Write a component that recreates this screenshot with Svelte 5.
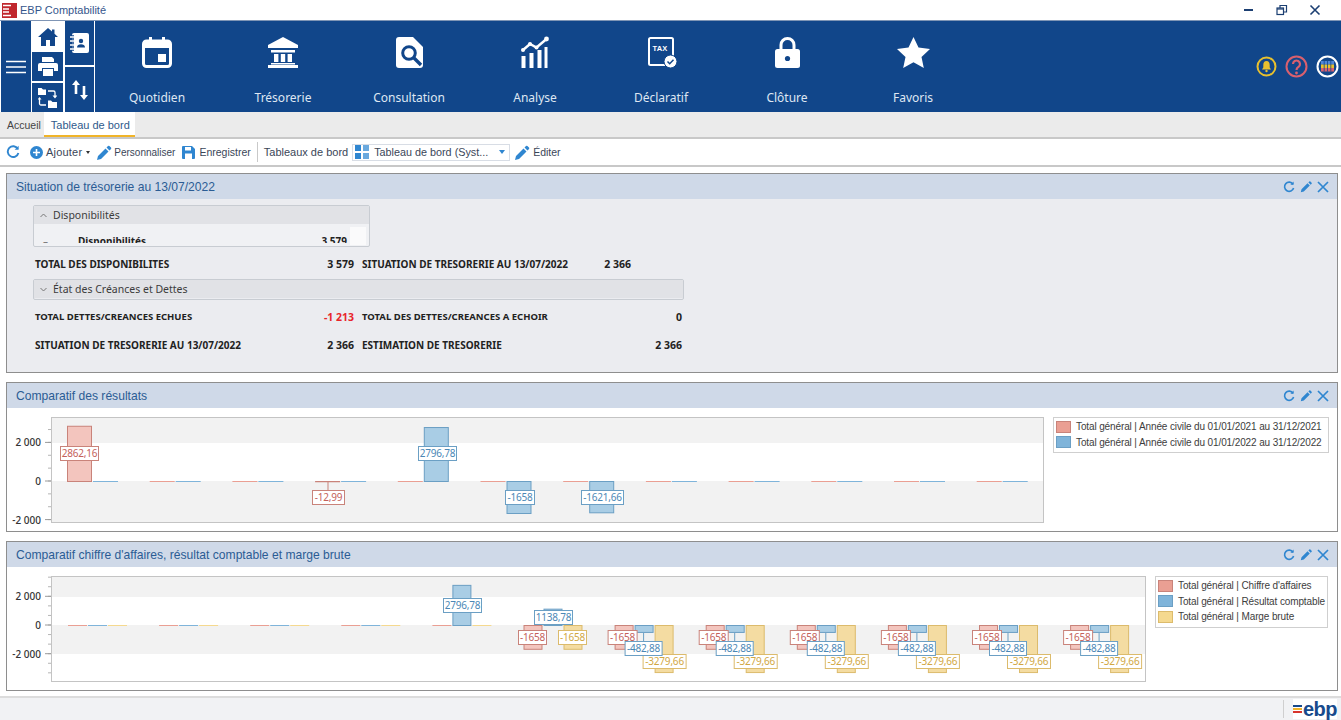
<script>
  const red = { fill: '#f3c5be', line: '#c9837a', text: '#c4615a', swatch: '#ea9f93' };
  const blue = { fill: '#a9cde5', line: '#6b9fc4', text: '#4b87b5', swatch: '#7fb4da' };
  const yellow = { fill: '#f4dca2', line: '#dcbb6c', text: '#d1a743', swatch: '#f5d98f' };

  const nav = ['Quotidien', 'Trésorerie', 'Consultation', 'Analyse', 'Déclaratif', 'Clôture', 'Favoris'];

  function bars(starts, width, series) {
    const out = [];
    starts.forEach((x, g) => {
      series.forEach((s, i) => {
        out.push({ x: x + i * (width + 1), w: width, v: s.values[g] ?? 0, c: s.color });
      });
    });
    return out;
  }

  const starts1 = Array.from({ length: 12 }, (_, i) => 67 + i * 82.7);
  const starts2 = Array.from({ length: 12 }, (_, i) => 68 + i * 91.1);

  const repeated = (first, n, v) => [...first, ...Array(n).fill(v)];

  const charts = [
    {
      title: 'Comparatif des résultats',
      view: { x: 7, y: 408, w: 1037, h: 122 },
      plot: { left: 51, right: 1043, top: 417, bottom: 522 },
      zero: 481,
      unit: 38.6,
      bands: [[417, 443, true], [443, 481, false], [481, 522, true]],
      ticks: [['2 000', 2000], ['0', 0], ['-2 000', -2000]],
      bars: bars(starts1, 25, [
        { color: red, values: [2862.16, 0, 0, -12.99] },
        { color: blue, values: [0, 0, 0, 0, 2796.78, -1658, -1621.66] }
      ]),
      labels: [
        { x: 60, y: 446, w: 38, t: '2862,16', c: red },
        { x: 312, y: 490, w: 32, t: '-12,99', c: red, stem: [328, 481] },
        { x: 418, y: 446, w: 38, t: '2796,78', c: blue },
        { x: 505, y: 490, w: 29, t: '-1658', c: blue },
        { x: 581, y: 490, w: 42, t: '-1621,66', c: blue }
      ],
      legend: [
        { c: red, t: 'Total général | Année civile du 01/01/2021 au 31/12/2021' },
        { c: blue, t: 'Total général | Année civile du 01/01/2022 au 31/12/2022' }
      ]
    },
    {
      title: "Comparatif chiffre d'affaires, résultat comptable et marge brute",
      view: { x: 7, y: 567, w: 1139, h: 122 },
      plot: { left: 51, right: 1145, top: 576, bottom: 681 },
      zero: 625,
      unit: 28.7,
      bands: [[576, 597, true], [597, 625, false], [625, 654, true], [654, 681, false]],
      ticks: [['2 000', 2000], ['0', 0], ['-2 000', -2000]],
      bars: bars(starts2, 19, [
        { color: red, values: repeated([0, 0, 0, 0, 0, -1658], 6, -1658) },
        { color: blue, values: repeated([0, 0, 0, 0, 2796.78, 1138.78], 6, -482.88) },
        { color: yellow, values: repeated([0, 0, 0, 0, 0, -1658], 6, -3279.66) }
      ]),
      labels: [
        { x: 443, y: 598, w: 38, t: '2796,78', c: blue },
        { x: 534, y: 610, w: 38, t: '1138,78', c: blue },
        { x: 518, y: 630, w: 28, t: '-1658', c: red },
        { x: 558, y: 630, w: 28, t: '-1658', c: yellow },
        ...starts2.slice(6).flatMap((x) => [
          { x: x + 28, y: 654, w: 43, t: '-3279,66', c: yellow },
          { x: x - 7, y: 630, w: 29, t: '-1658', c: red },
          { x: x + 10, y: 641, w: 37, t: '-482,88', c: blue, stem: [x + 29, 633] }
        ])
      ],
      legend: [
        { c: red, t: "Total général | Chiffre d'affaires" },
        { c: blue, t: 'Total général | Résultat comptable' },
        { c: yellow, t: 'Total général | Marge brute' }
      ]
    }
  ];

  function minors(chart) {
    const step = chart.unit / 3;
    const out = [];
    for (let y = chart.zero - step * 6; y < chart.plot.bottom; y += step) {
      if (y > chart.plot.top) out.push(y);
    }
    return out;
  }
</script>

{#snippet panelTools()}
  <div class="tools">
    <svg width="12" height="12" viewBox="0 0 12 12" fill="none" stroke="#2f86d0" stroke-width="1.6">
      <path d="M10 3.2A4.6 4.6 0 1 0 10.6 7" />
      <path d="M10.6 .6v3.2H7.4" fill="#2f86d0" stroke="none" />
    </svg>
    <svg width="12" height="12" viewBox="0 0 12 12" fill="#2f86d0">
      <path d="M0.8 11.2l.7-3 6-6 2.3 2.3-6 6zM8.4 1.4l.9-.9a.8.8 0 0 1 1.1 0l1.2 1.2a.8.8 0 0 1 0 1.1l-.9.9z" />
    </svg>
    <svg width="12" height="12" viewBox="0 0 12 12" stroke="#2f86d0" stroke-width="1.7">
      <path d="M1 1l10 10M11 1L1 11" />
    </svg>
  </div>
{/snippet}

{#snippet chevron(up)}
  <svg class="chev" width="7" height="5" viewBox="0 0 7 5" fill="none" stroke="#777" stroke-width="1">
    <path d={up ? 'M.5 4L3.500 1l3 3' : 'M.5 1l3 3 3-3'} />
  </svg>
{/snippet}

<div class="app">
  <header class="titlebar">
    <svg class="applogo" width="15" height="15" viewBox="0 0 15 15">
      <rect width="15" height="15" fill="#c0272d" />
      <path d="M1 2.500h8M1 6h6M1 9h6M1 12.500h8" stroke="#fff" stroke-width="1.400" />
    </svg>
    <span class="apptitle">EBP Comptabilité</span>
    <div class="winctl">
      <svg width="12" height="12" viewBox="0 0 12 12"><path d="M1 6h9" stroke="#1c3f72" stroke-width="2" /></svg>
      <svg width="12" height="12" viewBox="0 0 12 12" fill="none" stroke="#1c3f72" stroke-width="1.200"><rect x="1" y="4" width="6.500" height="6.500" /><path d="M4 4V1.500h6.500V8H7.500" /><path d="M1 5h6.500" /></svg>
      <svg width="12" height="12" viewBox="0 0 12 12"><path d="M1.500 1.500l9 9M10.500 1.500l-9 9" stroke="#1c3f72" stroke-width="1.600" /></svg>
    </div>
  </header>

  <nav class="ribbon">
    <div class="burger">
      <svg width="20" height="14" viewBox="0 0 20 14" stroke="#fff" stroke-width="1.400"><path d="M0 1.500h20M0 7h20M0 12.500h20" /></svg>
    </div>
    <div class="tiles">
      <div class="tilecol first">
        <div class="tile home">
          <svg width="20" height="18" viewBox="0 0 20 18" fill="#11468a"><path d="M10 0L0 9h3v9h5v-6h4v6h5V9h3l-3.500-3.200V1.500h-2.500v2z" /></svg>
        </div>
        <div class="tile print">
          <svg width="20" height="19" viewBox="0 0 20 19" fill="#fff"><path d="M4 0h10l2 2v3H4z" /><path d="M2 6h16a2 2 0 0 1 2 2v6h-4v-3H4v3H0V8a2 2 0 0 1 2-2z" /><path d="M5 12h10v7H5z" /></svg>
        </div>
        <div class="tile swap">
          <svg width="19" height="20" viewBox="0 0 19 20" fill="#fff"><path d="M0 0h3.500l1.500 1.500h3v5.500H0z" /><path d="M10 12.500h3l1.500 1.500H19v6h-9z" /><path d="M10 3h5.500a1.500 1.500 0 0 1 1.500 1.500V8M8 17H3a1.500 1.500 0 0 1-1.500-1.500V11" fill="none" stroke="#fff" stroke-width="1.300" /><path d="M14.500 7.500h5l-2.500 3zM-.5 11.500h4L1.500 9z" /></svg>
        </div>
      </div>
      <div class="tilecol second">
        <div class="tile contact">
          <svg width="19" height="20" viewBox="0 0 19 20"><path d="M2 2a2 2 0 0 1 2-2h13a2 2 0 0 1 2 2v16a2 2 0 0 1-2 2H4a2 2 0 0 1-2-2z" fill="#fff" /><path d="M0 4h4M0 8h4M0 12h4M0 16h4" stroke="#11468a" stroke-width="3.400" /><path d="M0 4h4M0 8h4M0 12h4M0 16h4" stroke="#fff" stroke-width="1.400" /><circle cx="11" cy="8" r="2.200" fill="#11468a" /><path d="M7 14.500c0-2.400 1.800-3.300 4-3.300s4 .9 4 3.300z" fill="#11468a" /></svg>
        </div>
        <div class="tile arrows">
          <svg width="16" height="20" viewBox="0 0 16 20" fill="#fff"><path d="M4 0l4 5H5.300v9H2.700V5H0zM12 20l-4-5h2.700V6h2.600v9H16z" /></svg>
        </div>
      </div>
    </div>

    {#each nav as label, i}
      <button class="navitem">
        <span class="navicon">
          {#if i === 0}
            <svg width="30" height="32" viewBox="0 0 30 32" fill="none"><rect x="1.500" y="5" width="27" height="25.500" rx="3" stroke="#fff" stroke-width="3" /><path d="M2 6h26v6H2zM7 1h3v6H7zM20 1h3v6h-3z" fill="#fff" /><rect x="16" y="18" width="8" height="8" fill="#fff" /></svg>
          {:else if i === 1}
            <svg width="30" height="31" viewBox="0 0 30 31" fill="#fff"><path d="M15 0L0 8v3h30V8z" /><path d="M3 13h24v2.400H3zM6 17h4.400v8H6zM12.800 17h4.400v8h-4.400zM19.600 17h4.400v8h-4.400zM3 26h24v1.600H3zM0 28h30v3H0z" /></svg>
          {:else if i === 2}
            <svg width="27" height="31" viewBox="0 0 27 31"><path d="M3 0h14l10 10v18a3 3 0 0 1-3 3H3a3 3 0 0 1-3-3V3a3 3 0 0 1 3-3z" fill="#fff" /><circle cx="13" cy="16" r="6.300" fill="none" stroke="#11468a" stroke-width="3" /><path d="M17.500 20.500L25 28" stroke="#11468a" stroke-width="3.400" /></svg>
          {:else if i === 3}
            <svg width="28" height="32" viewBox="0 0 28 32" fill="#fff"><path d="M2 20h4v12H2zM10 17h4v15h-4zM18 14h4v18h-4zM25 11h3v21h-3z" transform="translate(-1.500 0)" /><path d="M2 14l7-6 6.500 3.500L25.500 3" fill="none" stroke="#fff" stroke-width="2.400" /><circle cx="2" cy="14" r="2" /><circle cx="9" cy="8" r="2" /><circle cx="15.500" cy="11.500" r="2" /><circle cx="25.500" cy="3" r="2.400" /></svg>
          {:else if i === 4}
            <span class="taxicon">
              <svg width="29" height="31" viewBox="0 0 29 31" fill="none"><rect x="1" y="1" width="24" height="27" rx="1.500" stroke="#fff" stroke-width="2" /><circle cx="22.500" cy="24.500" r="6.500" fill="#fff" stroke="#11468a" stroke-width="1" /><path d="M19.500 24.500l2.200 2.200 3.800-4" stroke="#11468a" stroke-width="1.500" /></svg>
              <span class="taxtext">TAX</span>
            </span>
          {:else if i === 5}
            <svg width="25" height="31" viewBox="0 0 25 31"><path d="M6 13V8a6.500 6.500 0 0 1 13 0v5" fill="none" stroke="#fff" stroke-width="3" /><rect y="12" width="25" height="19" rx="2.500" fill="#fff" /><circle cx="12.500" cy="21.500" r="2.600" fill="#11468a" /></svg>
          {:else}
            <svg width="33" height="31" viewBox="0 0 33 31" fill="#fff"><path d="M16.500 0l5 10.600 11.500 1.400-8.500 8 2.300 11-10.300-5.700-10.300 5.700 2.300-11L0 12l11.500-1.400z" /></svg>
          {/if}
        </span>
        <span class="navlabel">{label}</span>
      </button>
    {/each}

    <div class="rightbtns">
      <svg width="21" height="21" viewBox="0 0 21 21"><circle cx="10.500" cy="10.500" r="9" fill="none" stroke="#e8c02e" stroke-width="2" /><path d="M10.500 5c2.400 0 3.200 1.800 3.200 4v2.500l1.300 2H6l1.300-2V9c0-2.200.8-4 3.200-4z" fill="#e8c02e" /><circle cx="10.500" cy="15" r="1.200" fill="#e8c02e" /></svg>
      <svg width="23" height="23" viewBox="0 0 23 23"><circle cx="11.500" cy="11.500" r="10" fill="none" stroke="#d9606e" stroke-width="2" /><path d="M8 9a3.500 3.500 0 1 1 5.500 2.900c-1.300.9-2 1.500-2 3" fill="none" stroke="#d9606e" stroke-width="2.200" /><circle cx="11.500" cy="18" r="1.400" fill="#d9606e" /></svg>
      <svg width="23" height="23" viewBox="0 0 23 23"><circle cx="11.500" cy="11.500" r="10" fill="#11468a" stroke="#fff" stroke-width="2" /><rect x="5" y="6" width="13" height="3.500" fill="#4f86d8" /><rect x="5" y="9.500" width="13" height="3.500" fill="#e8c02e" /><rect x="5" y="13" width="13" height="3.500" fill="#d9606e" /><path d="M8.200 6v10.500M11.500 6v10.500M14.800 6v10.500" stroke="#11468a" stroke-width=".8" /></svg>
    </div>
  </nav>

  <div class="tabs">
    <span class="tab">Accueil</span>
    <span class="tab active">Tableau de bord</span>
  </div>

  <div class="toolbar">
    <svg class="refresh" width="14" height="14" viewBox="0 0 14 14" fill="none" stroke="#2f86d0" stroke-width="1.900"><path d="M11.800 3.800A5.400 5.400 0 1 0 12.400 8" /><path d="M12.600.8v4H8.600" fill="#2f86d0" stroke="none" /></svg>
    <span class="tbtn add">
      <svg width="13" height="13" viewBox="0 0 13 13"><circle cx="6.500" cy="6.500" r="6.500" fill="#2f86d0" /><path d="M6.500 3v7M3 6.500h7" stroke="#fff" stroke-width="1.600" /></svg>
      Ajouter<i class="caret"></i>
    </span>
    <span class="tbtn perso">
      <svg width="15" height="15" viewBox="0 0 15 15" fill="#2f86d0"><path d="M0 15l1-4 7.500-7.500 3 3L4 14zM9.500 2.500l1.500-1.500a1 1 0 0 1 1.400 0l1.600 1.600a1 1 0 0 1 0 1.400L12.500 5.500z" /></svg>
      Personnaliser
    </span>
    <span class="tbtn save">
      <svg width="13" height="13" viewBox="0 0 13 13" fill="#2f86d0"><path d="M1 0h9l3 3v9a1 1 0 0 1-1 1H1a1 1 0 0 1-1-1V1a1 1 0 0 1 1-1z" /><rect x="3" y="1" width="6" height="3.500" fill="#fff" /><rect x="3" y="7.500" width="7" height="5.500" fill="#fff" /></svg>
      Enregistrer
    </span>
    <span class="sep"></span>
    <span class="tlabel">Tableaux de bord</span>
    <span class="combo">
      <svg width="14" height="14" viewBox="0 0 14 14" fill="#2f86d0"><rect width="6" height="6" /><rect x="8" width="6" height="6" fill="#6aa9de" /><rect y="8" width="6" height="6" /><rect x="8" y="8" width="6" height="6" fill="#6aa9de" /></svg>
      <span class="combotext">Tableau de bord (Syst...</span>
      <i class="comboarrow"></i>
    </span>
    <span class="tbtn edit">
      <svg width="15" height="15" viewBox="0 0 15 15" fill="#2f86d0"><path d="M0 15l1-4 7.500-7.500 3 3L4 14zM9.500 2.500l1.500-1.500a1 1 0 0 1 1.400 0l1.600 1.600a1 1 0 0 1 0 1.400L12.500 5.500z" /></svg>
      Éditer
    </span>
  </div>

  <main class="content">
    <section class="panel tresorerie">
      <div class="panelhead"><h2>Situation de trésorerie au 13/07/2022</h2>{@render panelTools()}</div>
      <div class="treso-body">
        <div class="expander first">
          <div class="exphead">{@render chevron(true)}Disponibilités</div>
          <div class="expclip">
            <div class="exprow"><span class="minus">–</span><b>Disponibilités</b><b class="cut">3 579</b></div>
          </div>
          <span class="scroll"></span>
        </div>
        <div class="row r1">
          <b>TOTAL DES DISPONIBILITES</b><b class="num">3 579</b>
          <b>SITUATION DE TRESORERIE AU 13/07/2022</b><b class="num short">2 366</b>
        </div>
        <div class="expander second">
          <div class="exphead">{@render chevron(false)}État des Créances et Dettes</div>
        </div>
        <div class="row r2">
          <b class="small">TOTAL DETTES/CREANCES ECHUES</b><b class="num neg">-1 213</b>
          <b class="small">TOTAL DES DETTES/CREANCES A ECHOIR</b><b class="num">0</b>
        </div>
        <div class="row r3">
          <b>SITUATION DE TRESORERIE AU 13/07/2022</b><b class="num">2 366</b>
          <b>ESTIMATION DE TRESORERIE</b><b class="num">2 366</b>
        </div>
      </div>
    </section>

    {#each charts as chart}
      <section class="panel chartpanel">
        <div class="panelhead"><h2>{chart.title}</h2>{@render panelTools()}</div>
        <div class="chartbody">
          <svg class="chart" width={chart.view.w} height={chart.view.h} viewBox="{chart.view.x} {chart.view.y} {chart.view.w} {chart.view.h}">
            {#each chart.bands as [a, b, gray]}
              <rect x={chart.plot.left} y={a} width={chart.plot.right - chart.plot.left} height={b - a} fill={gray ? '#f2f2f2' : '#fff'} />
              <line x1={chart.plot.left} x2={chart.plot.right} y1={b + 0.5} y2={b + 0.5} stroke="#e2e2e2" />
            {/each}
            <rect x={chart.plot.left + 0.5} y={chart.plot.top + 0.5} width={chart.plot.right - chart.plot.left} height={chart.plot.bottom - chart.plot.top} fill="none" stroke="#c4c4c4" />
            {#each minors(chart) as y}
              <line x1="48" x2="51" y1={y} y2={y} stroke="#b5b5b5" />
            {/each}
            {#each chart.ticks as [name, t]}
              {@const y = chart.zero - (t / 2000) * chart.unit}
              <line x1="45" x2="51" y1={y} y2={y} stroke="#9a9a9a" />
              <text class="axis" x="41" y={y + 4} text-anchor="end">{name}</text>
            {/each}
            {#each chart.bars as b}
              {#if b.v === 0}
                <rect x={b.x} y={chart.zero} width={b.w} height="1" fill={b.c.swatch} />
              {:else}
                {@const h = Math.abs(b.v) / 2000 * chart.unit}
                <rect x={b.x + 0.5} y={(b.v > 0 ? chart.zero - h : chart.zero) + 0.5} width={b.w - 1} height={h} fill={b.c.fill} stroke={b.c.line} />
              {/if}
            {/each}
            {#each chart.labels as l}
              {#if l.stem}
                <line x1={l.stem[0]} x2={l.stem[0]} y1={l.stem[1]} y2={l.y} stroke={l.c.line} />
              {/if}
              <rect x={l.x + 0.5} y={l.y + 0.5} width={l.w} height="14" fill="#fff" stroke={l.c.line} />
              <text class="lbl" x={l.x + l.w / 2 + 0.5} y={l.y + 11} text-anchor="middle" fill={l.c.text}>{l.t}</text>
            {/each}
          </svg>
          <div class="legend">
            {#each chart.legend as item}
              <div class="legenditem">
                <i style:background={item.c.swatch} style:border-color={item.c.line}></i>
                <span>{item.t}</span>
              </div>
            {/each}
          </div>
        </div>
      </section>
    {/each}
  </main>

  <footer class="statusbar">
    <span class="footsep"></span>
    <span class="ebp">
      <span class="stripes"><i class="s1"></i><i class="s2"></i><i class="s3"></i></span>ebp
    </span>
  </footer>
</div>

<style>
  :global(body) {
    margin: 0;
    background: #fff;
  }

  .app {
    width: 1341px;
    height: 720px;
    overflow: hidden;
    display: flex;
    flex-direction: column;
    font-family: "Liberation Sans", "Noto Sans", sans-serif;
    color: #333;
  }

  .titlebar {
    flex: none;
    display: flex;
    align-items: center;
    padding-left: 2px;
    border-bottom: 1px solid #7f95b5;
    box-sizing: border-box;
    height: 21px;
  }

  .apptitle {
    margin-left: 3px;
    font-size: 11px;
    color: #34558c;
  }

  .winctl {
    margin-left: auto;
    display: flex;
    gap: 21px;
    padding-right: 20px;
  }

  .ribbon {
    height: 91px;
    flex: none;
    display: flex;
    background: #11468a;
    position: relative;
  }

  .burger {
    width: 31px;
    display: flex;
    align-items: center;
    justify-content: center;
    flex: none;
    border-left: 1px solid #fff;
    box-sizing: border-box;
  }

  .tiles {
    width: 64px;
    flex: none;
    display: flex;
    gap: 2px;
    background: #fff;
    box-sizing: border-box;
    padding: 0 1px;
    margin-right: -1px;
  }

  .tilecol {
    display: flex;
    flex-direction: column;
    background: #fff;
  }

  .tilecol.first {
    width: 31px;
  }

  .tilecol.second {
    width: 29px;
    gap: 2px;
  }

  .tile {
    display: flex;
    align-items: center;
    justify-content: center;
    background: #11468a;
    flex: none;
  }

  .tile.home {
    background: #fff;
    height: 31px;
  }

  .tile.print {
    height: 29px;
    margin-bottom: 2px;
  }

  .tile.swap {
    height: 29px;
  }

  .tile.contact {
    height: 44px;
  }

  .tile.arrows {
    height: 45px;
  }

  .navitem {
    width: 126px;
    flex: none;
    border: 0;
    padding: 15px 0 0;
    background: none;
    color: #dfe7f3;
    font: inherit;
    display: flex;
    flex-direction: column;
    align-items: center;
  }

  .navicon {
    height: 32px;
    display: flex;
    align-items: center;
    justify-content: center;
  }

  .taxicon {
    position: relative;
    display: block;
    height: 31px;
    left: 1px;
  }

  .taxtext {
    position: absolute;
    left: 5px;
    top: 7px;
    font-size: 7.500px;
    font-weight: 700;
    color: #fff;
    letter-spacing: .2px;
  }

  .navlabel {
    margin-top: 21px;
    font-family: "Noto Sans", sans-serif;
    font-size: 12px;
    line-height: 18px;
  }

  .rightbtns {
    position: absolute;
    right: 2px;
    top: 34px;
    display: flex;
    align-items: center;
    gap: 8px;
  }

  .tabs {
    height: 27px;
    flex: none;
    display: flex;
    background: #ebebeb;
    box-sizing: border-box;
    border-bottom: 2px solid #c8c8c8;
    padding-left: 4px;
  }

  .tab {
    font-size: 10.500px;
    line-height: 27px;
    padding: 0 3px;
    color: #444;
    white-space: nowrap;
  }

  .tab.active {
    box-sizing: border-box;
    background: #fff;
    color: #2f5a8c;
    padding: 0 7px;
    height: 25px;
    width: 91px;
    border-bottom: 2px solid #f0b429;
    line-height: 27px;
    font-size: 11px;
  }

  .toolbar {
    height: 28px;
    flex: none;
    box-sizing: border-box;
    display: flex;
    align-items: center;
    border-bottom: 2px solid #c8c8c8;
    font-size: 10.500px;
    padding-left: 6px;
    color: #3a4658;
  }

  .tbtn {
    display: inline-flex;
    align-items: center;
    white-space: nowrap;
  }

  .add {
    margin-left: 10px;
    gap: 3px;
    font-size: 11px;
    letter-spacing: .2px;
  }

  .caret {
    width: 0;
    height: 0;
    border: 2.500px solid transparent;
    border-top: 3px solid #333;
    border-bottom: 0;
    margin-left: 1px;
  }

  .perso {
    margin-left: 7px;
    gap: 2px;
    font-size: 10px;
  }

  .save {
    margin-left: 7px;
    gap: 4px;
  }

  .sep {
    width: 1px;
    height: 20px;
    background: #c9c9c9;
    margin: 0 6px;
  }

  .tlabel {
    white-space: nowrap;
    font-size: 11px;
  }

  .combo {
    margin-left: 4px;
    flex: none;
    width: 158px;
    height: 17px;
    box-sizing: border-box;
    border: 1px solid #d8dde5;
    display: flex;
    align-items: center;
    gap: 5px;
    padding: 0 4px 0 2px;
    white-space: nowrap;
    font-size: 10.800px;
  }

  .comboarrow {
    margin-left: auto;
    width: 0;
    height: 0;
    border: 3.500px solid transparent;
    border-top: 4px solid #2f86d0;
    border-bottom: 0;
  }

  .edit {
    margin-left: 5px;
    gap: 3px;
  }

  .content {
    flex: 1;
    min-height: 0;
    display: flex;
    flex-direction: column;
    gap: 9px;
    padding: 6px 3px 0 6px;
  }

  .panel {
    flex: none;
    box-sizing: border-box;
    border: 1px solid #8e8e8e;
  }

  .tresorerie {
    height: 200px;
    background: #ebecf0;
  }

  .chartpanel {
    height: 150px;
    background: #fff;
  }

  .panelhead {
    height: 25px;
    box-sizing: border-box;
    background: #cfd9e8;
    display: flex;
    align-items: center;
    padding: 0 8px 0 9px;
  }

  h2 {
    margin: 0;
    font-size: 12.100px;
    font-weight: 400;
    color: #2b5c94;
  }

  .tools {
    margin-left: auto;
    display: flex;
    gap: 5px;
  }

  .treso-body {
    padding: 6px 0 0 26px;
    width: 650px;
    font-family: "Noto Sans", sans-serif;
    font-size: 10px;
    color: #222;
  }

  .expander {
    box-sizing: border-box;
    border: 1px solid #c8ccd2;
    border-radius: 2px;
    position: relative;
  }

  .expander.first {
    width: 337px;
    height: 42px;
    overflow: hidden;
    background: #f0f1f4;
  }

  .expander.second {
    width: 651px;
    height: 21px;
    margin-top: 8px;
  }

  .exphead {
    height: 18px;
    background: #e1e2e6;
    font-size: 10.500px;
    line-height: 18px;
    color: #3c3c3c;
    padding-left: 5px;
    display: flex;
    align-items: center;
  }

  .chev {
    margin: 0 6px 0 1px;
    flex: none;
  }

  .expclip {
    height: 19px;
    overflow: hidden;
    position: relative;
  }

  .exprow {
    position: relative;
    display: flex;
    height: 26px;
    padding: 9px 0 0 9px;
    box-sizing: border-box;
    line-height: 16px;
    font-size: 10px;
  }

  .exprow b:first-of-type {
    margin-left: 27px;
  }

  .minus {
    width: 8px;
    color: #777;
  }

  .cut {
    position: absolute;
    right: 22px;
    top: 9px;
  }

  .scroll {
    position: absolute;
    right: 3px;
    top: 21px;
    width: 16px;
    height: 18px;
    background: #fafafb;
  }

  .row {
    display: grid;
    grid-template-columns: 279px 40px 234px 1fr;
    margin-left: 2px;
    width: 647px;
    line-height: 14px;
    white-space: nowrap;
  }

  .row b {
    font-weight: 700;
  }

  .row b:nth-child(3) {
    padding-left: 8px;
  }

  .row .small {
    font-size: 9.500px;
  }

  .num {
    text-align: right;
    font-size: 10.500px;
  }

  .num.short {
    padding-right: 51px;
  }

  .neg {
    color: #e8242a;
  }

  .r1 {
    margin-top: 10px;
  }

  .r2 {
    margin-top: 10px;
  }

  .r3 {
    margin-top: 14px;
  }

  .chartbody {
    display: flex;
    align-items: flex-start;
    height: 122px;
    overflow: hidden;
  }

  .chart {
    display: block;
    flex: none;
  }

  .axis {
    font-family: "Noto Sans", sans-serif;
    font-size: 10px;
    font-weight: 500;
    fill: #333;
  }

  .lbl {
    font-family: "Noto Sans", sans-serif;
    font-size: 10px;
    letter-spacing: -.2px;
  }

  .legend {
    margin: 9px 0 0 9px;
    border: 1px solid #cfcfcf;
    padding: 1px 2px 2px;
    display: flex;
    flex-direction: column;
    box-sizing: border-box;
    width: 276px;
  }

  .chartpanel:last-child .legend {
    width: 173px;
  }

  .legenditem {
    display: flex;
    align-items: center;
    height: 15.500px;
    font-size: 10px;
    letter-spacing: -.12px;
    white-space: nowrap;
    color: #3d3d3d;
  }

  .legenditem i {
    width: 15px;
    height: 12px;
    border: 1px solid;
    box-sizing: border-box;
    margin-right: 5px;
    flex: none;
  }

  .statusbar {
    height: 24px;
    margin-top: 5px;
    flex: none;
    background: #f1f2f4;
    border-top: 2px solid #dcdcdc;
    box-sizing: border-box;
    display: flex;
    align-items: center;
    justify-content: flex-end;
    padding-right: 4px;
  }

  .footsep {
    width: 1px;
    height: 18px;
    background: #cfcfcf;
    margin-right: 9px;
  }

  .ebp {
    display: flex;
    align-items: center;
    background: #fff;
    height: 20px;
    font-family: "Liberation Sans", sans-serif;
    font-size: 20px;
    font-weight: 700;
    color: #174a8c;
    letter-spacing: -.5px;
    gap: 1px;
  }

  .stripes {
    display: flex;
    flex-direction: column;
    gap: 1px;
  }

  .stripes i {
    display: block;
    width: 9px;
    height: 2px;
  }

  .s1 {
    background: #174a8c;
  }

  .s2 {
    background: #f0b429;
  }

  .s3 {
    background: #d8342c;
  }
</style>
